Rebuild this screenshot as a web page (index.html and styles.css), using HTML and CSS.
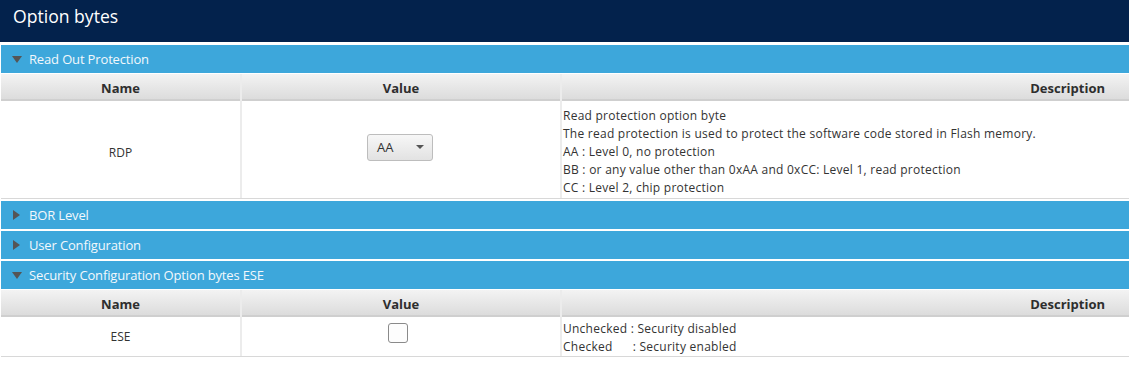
FILE: index.html
```html
<!DOCTYPE html>
<html>
<head>
<meta charset="utf-8">
<link rel="stylesheet" href="styles.css">
</head>
<body>
<div class="topbar"><span class="title">Option bytes</span></div>
<div class="content">
  <div class="sec sec-first">
    <div class="sec-head"><span class="tri-down"></span>Read Out Protection</div>
    <div class="grid">
      <div class="th">Name</div>
      <div class="th">Value</div>
      <div class="th th-desc">Description</div>
      <div class="td td-name rdp-row">RDP</div>
      <div class="td td-val rdp-row">
        <div class="select"><span>AA</span><span class="caret"></span></div>
      </div>
      <div class="td td-desc rdp-desc">
        <div>Read protection option byte</div>
        <div>The read protection is used to protect the software code stored in Flash memory.</div>
        <div>AA : Level 0, no protection</div>
        <div>BB : or any value other than 0xAA and 0xCC: Level 1, read protection</div>
        <div>CC : Level 2, chip protection</div>
      </div>
    </div>
  </div>
  <div class="sec">
    <div class="sec-head"><span class="tri-right"></span>BOR Level</div>
  </div>
  <div class="sec">
    <div class="sec-head"><span class="tri-right"></span>User Configuration</div>
  </div>
  <div class="sec">
    <div class="sec-head"><span class="tri-down"></span>Security Configuration Option bytes ESE</div>
    <div class="grid">
      <div class="th">Name</div>
      <div class="th">Value</div>
      <div class="th th-desc">Description</div>
      <div class="td td-name ese-row">ESE</div>
      <div class="td td-val ese-val"><div class="checkbox"></div></div>
      <div class="td td-desc ese-desc">
        <div>Unchecked : Security disabled</div>
        <div>Checked&nbsp;&nbsp;&nbsp;&nbsp;&nbsp;&nbsp;: Security enabled</div>
      </div>
    </div>
  </div>
</div>
</body>
</html>
```

FILE: styles.css
```css
html, body {
  margin: 0;
  padding: 0;
  background: #ffffff;
}
body {
  font-family: "Open Sans", "Noto Sans", sans-serif;
  font-size: 12px;
  color: #333333;
}
.topbar {
  height: 42px;
  background: #03224c;
  box-sizing: border-box;
  padding: 4px 0 0 13px;
}
.title {
  color: #ffffff;
  font-size: 17.6px;
  line-height: 24px;
}
.content {
  padding: 0 0 0 1px;
}
.sec {
  margin-top: 2px;
}
.sec-first {
  margin-top: 3px;
}
.sec-head {
  height: 28px;
  background: #3da7db;
  color: #f2f8fc;
  font-size: 13px;
  letter-spacing: -0.15px;
  line-height: 28px;
  display: flex;
  align-items: center;
  padding-left: 11px;
}
.tri-down {
  width: 0;
  height: 0;
  border-left: 5px solid transparent;
  border-right: 5px solid transparent;
  border-top: 7px solid #555555;
  margin-right: 7px;
}
.tri-right {
  width: 0;
  height: 0;
  border-top: 5px solid transparent;
  border-bottom: 5px solid transparent;
  border-left: 7px solid #555555;
  margin-left: 1px;
  margin-right: 9px;
}
.grid {
  display: grid;
  grid-template-columns: 239px 318px 1fr;
  column-gap: 2px;
  background: #ececec;
  border-top: 1px solid #ffffff;
  border-bottom: 1px solid #d8d8d8;
}
.th {
  box-sizing: border-box;
  padding-top: 3px;
  background: linear-gradient(#f3f3f3, #dcdcdc);
  border-bottom: 2px solid #cfcfcf;
  height: 27px;
  font-weight: bold;
  font-size: 13px;
  color: #2e2e2e;
  display: flex;
  align-items: center;
  justify-content: center;
}
.th-desc {
  justify-content: flex-end;
  padding-right: 24px;
}
.td {
  background: #ffffff;
}
.td-name {
  display: flex;
  align-items: center;
  justify-content: center;
}
.rdp-row {
  height: 97px;
  box-sizing: border-box;
  padding-top: 5px;
}
.td-val {
  display: flex;
  justify-content: center;
}
.rdp-row.td-val {
  align-items: center;
  padding-top: 0;
}
.select {
  width: 66px;
  height: 27px;
  box-sizing: border-box;
  border: 1px solid #bdbdbd;
  border-radius: 3px;
  background: linear-gradient(#f7f7f7, #e2e2e2);
  display: flex;
  align-items: center;
  justify-content: space-between;
  padding: 0 8px 0 9px;
  margin: -5px 0 0 -2px;
  font-size: 13px;
  color: #333;
}
.caret {
  width: 0;
  height: 0;
  border-left: 4px solid transparent;
  border-right: 4px solid transparent;
  border-top: 4px solid #555;
}
.td-desc {
  padding: 6px 0 0 1px;
  line-height: 18px;
  letter-spacing: 0.25px;
}
.ese-row {
  height: 39px;
}
.ese-val {
  padding-top: 6px;
}
.checkbox {
  width: 20px;
  height: 20px;
  box-sizing: border-box;
  border: 1px solid #8a8a8a;
  border-radius: 3px;
  background: #fdfdfd;
  margin-left: -6px;
}
.ese-desc {
  padding-top: 3px;
}
```
